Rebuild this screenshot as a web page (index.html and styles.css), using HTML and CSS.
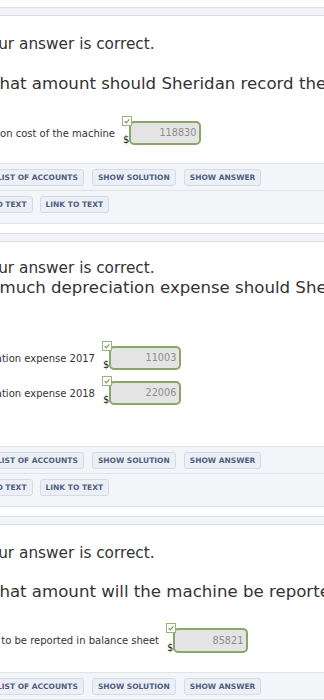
FILE: index.html
```html
<!DOCTYPE html>
<html lang="en">
<head>
    <meta charset="UTF-8">
    <meta name="viewport" content="width=device-width, initial-scale=1.0">
    <title>Answers</title>
    <link rel="stylesheet" href="styles.css">
</head>
<body>

    <div class="panel panel-first">
        <div class="strip"></div>
        <p class="verdict">Your answer is correct.</p>
        <p class="question cut-what">What amount should Sheridan record the acquisition cost of the machine?</p>

        <div class="answer-row row-a">
            <div class="label label-a"><span>Acquisition cost of the machine</span></div>
            <span class="dollar">$</span>
            <div class="field">
                <span class="tick"><svg width="8" height="8" viewBox="0 0 8 8"><path d="M1.6 4.2 L3.3 5.8 L6.4 2.4" fill="none" stroke="#7f9c5a" stroke-width="1.2"/></svg></span>
                118830
            </div>
        </div>

        <div class="bar bar-a">
            <div class="btn-row row-top">
                <span class="btn">LIST OF ACCOUNTS</span>
                <span class="btn">SHOW SOLUTION</span>
                <span class="btn">SHOW ANSWER</span>
            </div>
            <div class="btn-row row-bottom">
                <span class="btn">LINK TO TEXT</span>
                <span class="btn">LINK TO TEXT</span>
            </div>
        </div>
    </div>

    <div class="panel">
        <div class="strip"></div>
        <p class="verdict verdict-b">Your answer is correct.</p>
        <p class="question cut-how">How much depreciation expense should Sheridan record in 2017 and 2018?</p>

        <div class="answer-row row-b1">
            <div class="label label-b"><span>Depreciation expense 2017</span></div>
            <span class="dollar">$</span>
            <div class="field">
                <span class="tick"><svg width="8" height="8" viewBox="0 0 8 8"><path d="M1.6 4.2 L3.3 5.8 L6.4 2.4" fill="none" stroke="#7f9c5a" stroke-width="1.2"/></svg></span>
                11003
            </div>
        </div>
        <div class="answer-row row-b2">
            <div class="label label-b"><span>Depreciation expense 2018</span></div>
            <span class="dollar">$</span>
            <div class="field">
                <span class="tick"><svg width="8" height="8" viewBox="0 0 8 8"><path d="M1.6 4.2 L3.3 5.8 L6.4 2.4" fill="none" stroke="#7f9c5a" stroke-width="1.2"/></svg></span>
                22006
            </div>
        </div>

        <div class="bar bar-b">
            <div class="btn-row row-top">
                <span class="btn">LIST OF ACCOUNTS</span>
                <span class="btn">SHOW SOLUTION</span>
                <span class="btn">SHOW ANSWER</span>
            </div>
            <div class="btn-row row-bottom">
                <span class="btn">LINK TO TEXT</span>
                <span class="btn">LINK TO TEXT</span>
            </div>
        </div>
    </div>

    <div class="panel">
        <div class="strip"></div>
        <p class="verdict verdict-c">Your answer is correct.</p>
        <p class="question cut-what">What amount will the machine be reported at in the balance sheet?</p>

        <div class="answer-row row-c">
            <div class="label label-c"><span>Amount to be reported in balance sheet</span></div>
            <span class="dollar">$</span>
            <div class="field field-wide">
                <span class="tick"><svg width="8" height="8" viewBox="0 0 8 8"><path d="M1.6 4.2 L3.3 5.8 L6.4 2.4" fill="none" stroke="#7f9c5a" stroke-width="1.2"/></svg></span>
                85821
            </div>
        </div>

        <div class="bar bar-c">
            <div class="btn-row row-top">
                <span class="btn">LIST OF ACCOUNTS</span>
                <span class="btn">SHOW SOLUTION</span>
                <span class="btn">SHOW ANSWER</span>
            </div>
            <div class="btn-row row-bottom">
                <span class="btn">LINK TO TEXT</span>
                <span class="btn">LINK TO TEXT</span>
            </div>
        </div>
    </div>

</body>
</html>
```

FILE: styles.css
```css
html, body {
    margin: 0;
    padding: 0;
}
body {
    font-family: "DejaVu Sans", Verdana, sans-serif;
    color: #333;
    background-color: #fff;
    overflow: hidden;
}
.panel {
    margin-top: 9px;
}
.panel-first {
    margin-top: 7px;
}
.strip {
    height: 7px;
    background-color: #f3f4f9;
    border-top: 1px solid #dcdde5;
    border-bottom: 1px solid #dcdde5;
}
.verdict,
.question {
    font-size: 15.3px;
    line-height: 20px;
    white-space: nowrap;
    margin: 18px 0 0 -18.5px;
}
.verdict-b {
    margin-top: 16px;
}
.question {
    font-size: 16.6px;
    margin-top: 20px;
}
.cut-what {
    margin-left: -17px;
}
.cut-how {
    margin-left: -42px;
    margin-top: 0;
}
.verdict-c + .question {
    margin-top: 19px;
}

/* answer rows */
.answer-row {
    display: flex;
    align-items: center;
    height: 24px;
}
.row-a { margin-top: 27px; }
.row-b1 { margin-top: 48px; }
.row-b2 { margin-top: 11px; }
.row-c { margin-top: 26px; height: 25px; }

.label {
    display: flex;
    justify-content: flex-end;
    overflow: hidden;
    white-space: nowrap;
    box-sizing: border-box;
    padding-right: 8px;
    font-size: 10px;
    color: #333;
    flex-shrink: 0;
}
.label-a { width: 123px; }
.label-b { width: 103px; }
.label-c { width: 167px; }

.dollar {
    align-self: flex-end;
    font-size: 10px;
    line-height: 12px;
    margin-bottom: -1px;
    color: #222;
}
.field {
    position: relative;
    box-sizing: border-box;
    width: 72px;
    height: 24px;
    border: 2px solid #8ba766;
    border-radius: 5px;
    background-color: #e4e4e4;
    color: #8c8c8c;
    font-size: 9.7px;
    line-height: 20px;
    text-align: right;
    padding-right: 3px;
}
.field-wide {
    width: 75px;
    height: 25px;
    line-height: 21px;
}
.tick {
    position: absolute;
    top: -7px;
    left: -9px;
    width: 8px;
    height: 8px;
    border: 1px solid #9cb27c;
    background-color: #fff;
    display: flex;
}

/* button bar */
.bar {
    background-color: #f4f5f9;
    border-top: 1px solid #e0e2e9;
    border-bottom: 1px solid #e0e2e9;
}
.bar-a { margin-top: 18px; }
.bar-b { margin-top: 41px; }
.bar-c { margin-top: 19px; }

.btn-row {
    display: flex;
    gap: 8px;
    padding: 5px 0 4px;
}
.row-bottom {
    gap: 7px;
    border-top: 1px solid #e0e2e9;
    padding-bottom: 10px;
}
.row-top .btn:first-child {
    margin-left: -9px;
}
.row-bottom .btn:first-child {
    margin-left: -37px;
}
.btn {
    flex-shrink: 0;
    font-size: 7.5px;
    font-weight: bold;
    line-height: 15px;
    color: #4f5e80;
    background-color: #edeff6;
    border: 1px solid #d7dae4;
    border-radius: 3px;
    padding: 0 5px;
    white-space: nowrap;
}
```
